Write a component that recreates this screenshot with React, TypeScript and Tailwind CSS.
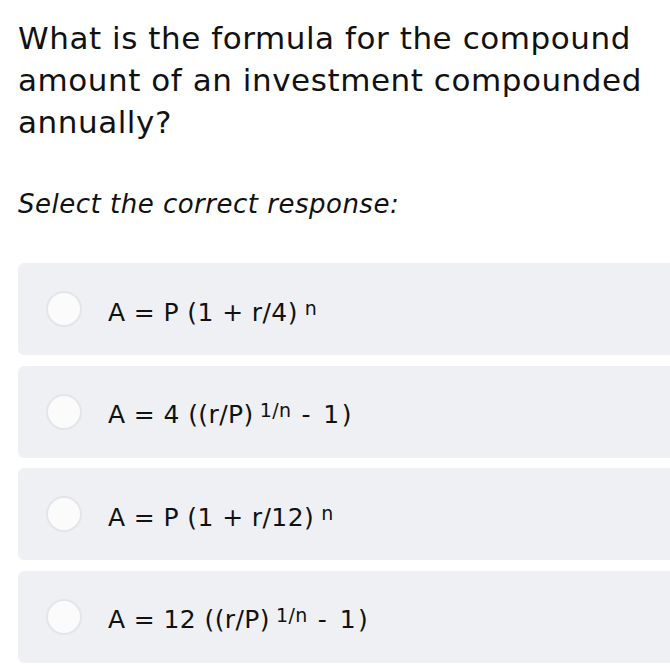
type Option = {
  base: string;
  sup: string;
  tail?: string;
};

const options: Option[] = [
  { base: "A = P (1 + r/4)", sup: "n" },
  { base: "A = 4 ((r/P)", sup: "1/n", tail: "- 1)" },
  { base: "A = P (1 + r/12)", sup: "n" },
  { base: "A = 12 ((r/P)", sup: "1/n", tail: "- 1)" },
];

const font = { fontFamily: '"DejaVu Sans", "Noto Sans", sans-serif' };

function Formula({ base, sup, tail }: Option) {
  return (
    <span className="text-[25px] leading-none text-[#111] whitespace-nowrap tracking-[0.4px]" style={font}>
      {base}
      <span className={`relative -top-[6px] text-[19px] ${sup === "n" ? "ml-[7px]" : "ml-[6px]"}`}>{sup}</span>
      {tail && <span className="ml-[10px] tracking-[2.5px]">{tail}</span>}
    </span>
  );
}

export default function App() {
  return (
    <div className="w-full overflow-hidden bg-white min-h-[666px]">
      <div className="pl-[18px] pt-[17px]">
        {/* Question */}
        <h1 className="text-[31px] leading-[42px] font-normal text-[#111] tracking-[0.55px]" style={font}>
          What is the formula for the compound amount of an investment compounded annually?
        </h1>

        <p className="mt-[48px] text-[26px] italic font-normal text-[#111] leading-none tracking-[0.5px]" style={font}>
          Select the correct response:
        </p>

        {/* Options */}
        <div className="mt-[46px] flex flex-col gap-[10.5px] w-[700px]">
          {options.map((o, i) => (
            <div key={i} className="h-[92px] rounded-[6px] bg-[#eef0f4] flex items-center pl-[28px]">
              <div className="w-[36px] h-[36px] rounded-full bg-[#fbfbfc] border-2 border-[#e3e5ea] shrink-0" />
              <div className="ml-[26px] pt-[8px]">
                <Formula {...o} />
              </div>
            </div>
          ))}
        </div>
      </div>
    </div>
  );
}
